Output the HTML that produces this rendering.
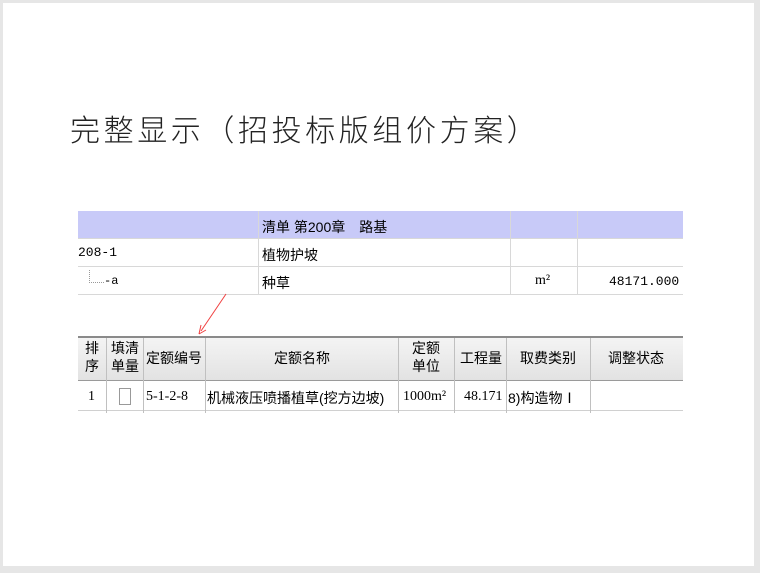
<!DOCTYPE html>
<html><head><meta charset="utf-8"><style>
body{margin:0;width:760px;height:573px;background:#e6e6e6;position:relative;overflow:hidden;font-family:"Liberation Sans","Noto Sans CJK SC",sans-serif;}
.slide{position:absolute;left:3px;top:3px;width:751px;height:563px;background:#fff;}
.title{position:absolute;left:70px;top:106px;font-size:30px;letter-spacing:3.6px;color:#222;font-family:"Noto Sans CJK SC",sans-serif;font-weight:300;white-space:nowrap;}
.a{position:absolute;font-size:14px;color:#000;white-space:nowrap;}
.hl{position:absolute;height:1px;}
.vl{position:absolute;width:1px;}
</style></head><body>
<div class="slide"></div>
<div class="title">完整显示（招投标版组价方案）</div>

<!-- table 1 -->
<div style="position:absolute;left:78px;top:211px;width:605px;height:27px;background:#c8caf8"></div>
<div class="hl" style="left:78px;top:238px;width:605px;background:#d8d8d8"></div>
<div class="hl" style="left:78px;top:266px;width:605px;background:#d8d8d8"></div>
<div class="hl" style="left:78px;top:294px;width:605px;background:#d8d8d8"></div>
<div class="vl" style="left:258px;top:211px;height:83px;background:#d8d8d8"></div>
<div class="vl" style="left:510px;top:211px;height:83px;background:#d8d8d8"></div>
<div class="vl" style="left:577px;top:211px;height:83px;background:#d8d8d8"></div>
<div class="a" style="left:262px;top:217px">清单 第200章　路基</div>
<div class="a" style="left:78px;top:245px;font-family:'Liberation Mono',monospace;font-size:13px">208-1</div>
<div class="a" style="left:262px;top:245px">植物护坡</div>
<div style="position:absolute;left:89px;top:270px;width:14px;height:12px;border-left:1px dotted #999;border-bottom:1px dotted #999"></div>
<div class="a" style="left:104px;top:274px;font-family:'Liberation Mono',monospace;font-size:12px">-a</div>
<div class="a" style="left:262px;top:273px">种草</div>
<div class="a" style="left:535px;top:273px;font-family:'Liberation Serif',serif">m²</div>
<div class="a" style="left:609px;top:274px;font-family:'Liberation Mono',monospace;font-size:13px">48171.000</div>

<svg style="position:absolute;left:0;top:0" width="760" height="573"><line x1="226" y1="294" x2="201" y2="331" stroke="#f04040" stroke-width="1"/><path d="M199 334 L201 325 M199 334 L206 330" stroke="#f04040" fill="none"/></svg>

<!-- table 2 -->
<div style="position:absolute;left:78px;top:336px;width:605px;height:45px;background:linear-gradient(#f4f4f4,#e2e2e2);border-top:2px solid #8a8a8a;box-sizing:border-box"></div>
<div class="hl" style="left:78px;top:380px;width:605px;background:#9a9a9a"></div>
<div class="hl" style="left:78px;top:410px;width:605px;background:#d0d0d0"></div>
<div class="vl" style="left:106px;top:338px;height:75px;background:#c0c0c0"></div>
<div class="vl" style="left:143px;top:338px;height:75px;background:#c0c0c0"></div>
<div class="vl" style="left:205px;top:338px;height:75px;background:#c0c0c0"></div>
<div class="vl" style="left:398px;top:338px;height:75px;background:#c0c0c0"></div>
<div class="vl" style="left:454px;top:338px;height:75px;background:#c0c0c0"></div>
<div class="vl" style="left:506px;top:338px;height:75px;background:#c0c0c0"></div>
<div class="vl" style="left:590px;top:338px;height:75px;background:#c0c0c0"></div>
<div class="a" style="left:85px;top:339px;line-height:18px">排<br>序</div>
<div class="a" style="left:111px;top:339px;line-height:18px">填清<br>单量</div>
<div class="a" style="left:146px;top:348px">定额编号</div>
<div class="a" style="left:274px;top:348px">定额名称</div>
<div class="a" style="left:412px;top:339px;line-height:18px">定额<br>单位</div>
<div class="a" style="left:460px;top:348px">工程量</div>
<div class="a" style="left:520px;top:348px">取费类别</div>
<div class="a" style="left:608px;top:348px">调整状态</div>
<div class="a" style="left:88px;top:389px;font-family:'Liberation Serif',serif">1</div>
<div style="position:absolute;left:119px;top:388px;width:10px;height:15px;border:1px solid #999"></div>
<div class="a" style="left:146px;top:389px;font-family:'Liberation Serif',serif">5-1-2-8</div>
<div class="a" style="left:207px;top:388px">机械液压喷播植草(挖方边坡)</div>
<div class="a" style="left:403px;top:389px;font-family:'Liberation Serif',serif">1000m²</div>
<div class="a" style="left:464px;top:389px;font-family:'Liberation Serif',serif">48.171</div>
<div class="a" style="left:508px;top:388px">8)构造物Ⅰ</div>
</body></html>
